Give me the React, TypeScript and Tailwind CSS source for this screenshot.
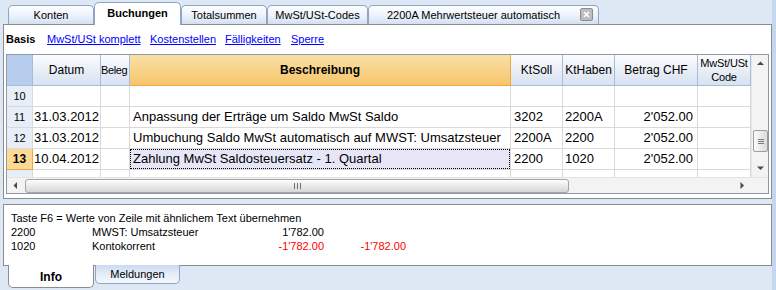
import React from 'react';

type Row = { n: string; d: string; b: string; t: string; s: string; h: string; a: string; sel?: boolean };

const rows: Row[] = [
  { n: '10', d: '', b: '', t: '', s: '', h: '', a: '' },
  { n: '11', d: '31.03.2012', b: '', t: 'Anpassung der Erträge um Saldo MwSt Saldo', s: '3202', h: '2200A', a: "2'052.00" },
  { n: '12', d: '31.03.2012', b: '', t: 'Umbuchung Saldo MwSt automatisch auf MWST: Umsatzsteuer', s: '2200A', h: '2200', a: "2'052.00" },
  { n: '13', d: '10.04.2012', b: '', t: 'Zahlung MwSt Saldosteuersatz - 1. Quartal', s: '2200', h: '1020', a: "2'052.00", sel: true },
];

function Tab({ w, label, active, close }: { w: string; label: string; active?: boolean; close?: boolean }) {
  if (active) {
    return (
      <div className={`${w} h-[23px] -mb-px relative z-10 bg-white border border-b-0 border-[#8ea5c5] rounded-t-[5px] flex items-center justify-center pb-[2px] text-[11px] font-bold text-black`}>
        {label}
      </div>
    );
  }
  return (
    <div className={`${w} h-[19px] border border-b-0 border-[#8ea5c5] rounded-t-[5px] bg-linear-to-b from-[#fdfeff] via-[#eef3fb] to-[#d3e0f2] flex items-center ${close ? 'justify-between pl-[18px] pr-[5px]' : 'justify-center'} text-[11px] text-black`}>
      <span className="whitespace-nowrap">{label}</span>
      {close && (
        <span className="w-[13px] h-[13px] mb-[1px] rounded-[2px] border border-[#8d8d8d] bg-[#bdbdbd] flex items-center justify-center">
          <svg width="7" height="7" viewBox="0 0 7 7">
            <path d="M1 1L6 6M6 1L1 6" stroke="#ffffff" strokeWidth="1.6" />
          </svg>
        </span>
      )}
    </div>
  );
}

function Arrow({ dir }: { dir: 'up' | 'down' | 'left' | 'right' }) {
  const d = {
    up: 'M0 4L3.5 0.5L7 4Z',
    down: 'M0 0.5L3.5 4L7 0.5Z',
    left: 'M4 0L0.5 3.5L4 7Z',
    right: 'M0.5 0L4 3.5L0.5 7Z',
  }[dir];
  const vert = dir === 'up' || dir === 'down';
  return (
    <svg width={vert ? 7 : 5} height={vert ? 5 : 7} viewBox={vert ? '0 0 7 5' : '0 0 5 7'}>
      <path d={d} fill="#4a4a4a" />
    </svg>
  );
}

const cols = 'grid grid-cols-[26px_68px_29px_381px_52px_52px_83px_53px]';
const cellBase = 'border-r border-b border-[#d9d9d9] overflow-hidden whitespace-nowrap flex items-center text-[13px] text-black';

export default function App() {
  return (
    <div className="w-[776px] h-[290px] bg-[#dee8f5] flex font-['Liberation_Sans',Arial,sans-serif] overflow-hidden">
      <div className="w-[772px] flex flex-col">
        {/* top tabs */}
        <div className="h-[24px] flex items-end pl-[8px] shrink-0">
          <Tab w="w-[86px]" label="Konten" />
          <Tab w="w-[87px]" label="Buchungen" active />
          <Tab w="w-[86px]" label="Totalsummen" />
          <Tab w="w-[101px]" label="MwSt/USt-Codes" />
          <Tab w="w-[231px]" label="2200A Mehrwertsteuer automatisch" close />
        </div>

        {/* top panel */}
        <div className="ml-[3px] w-[769px] h-[175px] shrink-0 border border-[#8d8d8d] bg-white flex flex-col">
          <div className="h-[29px] flex items-center pl-[2px] text-[11px] shrink-0">
            <span className="w-[41px] font-bold text-black">Basis</span>
            <a className="w-[103px] text-[#0000ff] underline whitespace-nowrap">MwSt/USt komplett</a>
            <a className="w-[75px] text-[#0000ff] underline whitespace-nowrap">Kostenstellen</a>
            <a className="w-[66px] text-[#0000ff] underline whitespace-nowrap">Fälligkeiten</a>
            <a className="text-[#0000ff] underline whitespace-nowrap">Sperre</a>
          </div>

          {/* grid */}
          <div className="ml-[2px] w-[763px] h-[140px] border border-[#8f9aa6] flex flex-col shrink-0">
            <div className="flex h-[122px]">
              <div className="w-[744px] flex flex-col">
                {/* header */}
                <div className={`${cols} h-[31px]`}>
                  <div className="border-r border-b border-[#a7bcd9] bg-[#b6cdee]" />
                  <div className="border-r border-b border-[#a7bcd9] bg-linear-to-b from-[#fbfcfe] to-[#d8e1f0] flex items-center justify-center text-[12px]">Datum</div>
                  <div className="border-r border-b border-[#a7bcd9] bg-linear-to-b from-[#fbfcfe] to-[#d8e1f0] flex items-center text-[11px] tracking-[-0.4px] whitespace-nowrap">Beleg</div>
                  <div className="border-r border-b border-[#f0a838] bg-linear-to-b from-[#f9e0a4] to-[#f6c56c] flex items-center justify-center text-[12px] font-bold">Beschreibung</div>
                  <div className="border-r border-b border-[#a7bcd9] bg-linear-to-b from-[#fbfcfe] to-[#d8e1f0] flex items-center justify-center text-[12px]">KtSoll</div>
                  <div className="border-r border-b border-[#a7bcd9] bg-linear-to-b from-[#fbfcfe] to-[#d8e1f0] flex items-center justify-center text-[12px]">KtHaben</div>
                  <div className="border-r border-b border-[#a7bcd9] bg-linear-to-b from-[#fbfcfe] to-[#d8e1f0] flex items-center justify-center text-[12px] whitespace-nowrap">Betrag CHF</div>
                  <div className="border-r border-b border-[#a7bcd9] bg-linear-to-b from-[#fbfcfe] to-[#d8e1f0] flex flex-col items-center justify-center text-[11px] leading-[14px] tracking-[-0.2px] whitespace-nowrap">
                    <span>MwSt/USt</span>
                    <span>Code</span>
                  </div>
                </div>
                {/* rows */}
                {rows.map((r) => (
                  <div key={r.n} className={`${cols} h-[21px]`}>
                    <div className={`border-r border-b flex items-center justify-center ${r.sel ? 'bg-[#fdd996] border-[#f0a838] font-bold text-[12px]' : 'bg-[#e8eef8] border-[#d2dbe8] text-[11px]'}`}>{r.n}</div>
                    <div className={`${cellBase} pl-[1px]`}>{r.d}</div>
                    <div className={cellBase}>{r.b}</div>
                    {r.sel ? (
                      <div className={cellBase}>
                        <div className="w-full h-full bg-[#e6e6f7] border border-dotted border-black flex items-center pl-[2px]">{r.t}</div>
                      </div>
                    ) : (
                      <div className={`${cellBase} pl-[3px]`}>{r.t}</div>
                    )}
                    <div className={`${cellBase} pl-[3px]`}>{r.s}</div>
                    <div className={`${cellBase} pl-[2px]`}>{r.h}</div>
                    <div className={`${cellBase} justify-end pr-[4px]`}>{r.a}</div>
                    <div className={cellBase} />
                  </div>
                ))}
                <div className={`${cols} h-[7px] overflow-hidden`}>
                  <div className="border-r border-[#d2dbe8] bg-[#e8eef8]" />
                  <div className="border-r border-[#d9d9d9]" />
                  <div className="border-r border-[#d9d9d9]" />
                  <div className="border-r border-[#d9d9d9]" />
                  <div className="border-r border-[#d9d9d9]" />
                  <div className="border-r border-[#d9d9d9]" />
                  <div className="border-r border-[#d9d9d9]" />
                  <div className="border-r border-[#d9d9d9]" />
                </div>
              </div>
              {/* vertical scrollbar */}
              <div className="w-[17px] flex flex-col bg-[#f3f3f3] border-l border-[#e6e6e6]">
                <div className="h-[17px] flex items-center justify-center"><Arrow dir="up" /></div>
                <div className="flex-1 pt-[58px]">
                  <div className="ml-px w-[15px] h-[22px] rounded-[2px] border border-[#9c9c9c] bg-linear-to-r from-[#fafafa] to-[#dcdcdc] flex flex-col items-center justify-center gap-[1px]">
                    <span className="w-[6px] h-px bg-[#7a7a7a]" />
                    <span className="w-[6px] h-px bg-[#7a7a7a]" />
                    <span className="w-[6px] h-px bg-[#7a7a7a]" />
                  </div>
                </div>
                <div className="h-[17px] flex items-center justify-center"><Arrow dir="down" /></div>
              </div>
            </div>
            {/* horizontal scrollbar */}
            <div className="flex h-[16px] bg-[#f3f3f3] border-t border-[#e4e4e4]">
              <div className="w-[17px] flex items-center justify-center"><Arrow dir="left" /></div>
              <div className="w-[710px] flex items-center">
                <div className="ml-px w-[544px] h-[14px] rounded-[3px] border border-[#a5a5a5] bg-linear-to-b from-[#fdfdfd] to-[#d6d6d6] flex items-center justify-center gap-[1px]">
                  <span className="w-px h-[6px] bg-[#6f6f6f]" />
                  <span className="w-px h-[6px] bg-[#6f6f6f] ml-[1px]" />
                  <span className="w-px h-[6px] bg-[#6f6f6f] ml-[1px]" />
                </div>
              </div>
              <div className="w-[17px] flex items-center justify-center"><Arrow dir="right" /></div>
              <div className="flex-1" />
            </div>
          </div>
        </div>

        {/* bottom panel */}
        <div className="ml-[3px] mt-[5px] w-[769px] h-[62px] shrink-0 border border-[#8d8d8d] bg-white pt-[6px] pl-[7px] text-[11px] leading-[14px] text-black">
          <div className="whitespace-nowrap">Taste F6 = Werte von Zeile mit ähnlichem Text übernehmen</div>
          <div className="flex">
            <span className="w-[81px]">2200</span>
            <span className="w-[150px]">MWST: Umsatzsteuer</span>
            <span className="w-[82px] text-right">1'782.00</span>
          </div>
          <div className="flex">
            <span className="w-[81px]">1020</span>
            <span className="w-[150px]">Kontokorrent</span>
            <span className="w-[82px] text-right text-[#ff0000]">-1'782.00</span>
            <span className="w-[82px] text-right text-[#ff0000]">-1'782.00</span>
          </div>
        </div>

        {/* bottom tabs */}
        <div className="flex items-start pl-[8px]">
          <div className="w-[86px] h-[23px] -mt-px relative z-10 bg-white border border-t-0 border-[#8d8d8d] rounded-b-[5px] flex items-center justify-center pt-[1px] text-[12px] font-bold">Info</div>
          <div className="ml-[1px] w-[85px] h-[19px] -mt-px border border-t-0 border-[#8ea5c5] rounded-b-[5px] bg-linear-to-b from-[#c9daf2] via-[#e4edf9] to-[#f4f8fd] flex items-center justify-center text-[11px]">Meldungen</div>
        </div>
      </div>
      <div className="w-[4px] bg-[#c3d7f0]" />
    </div>
  );
}
